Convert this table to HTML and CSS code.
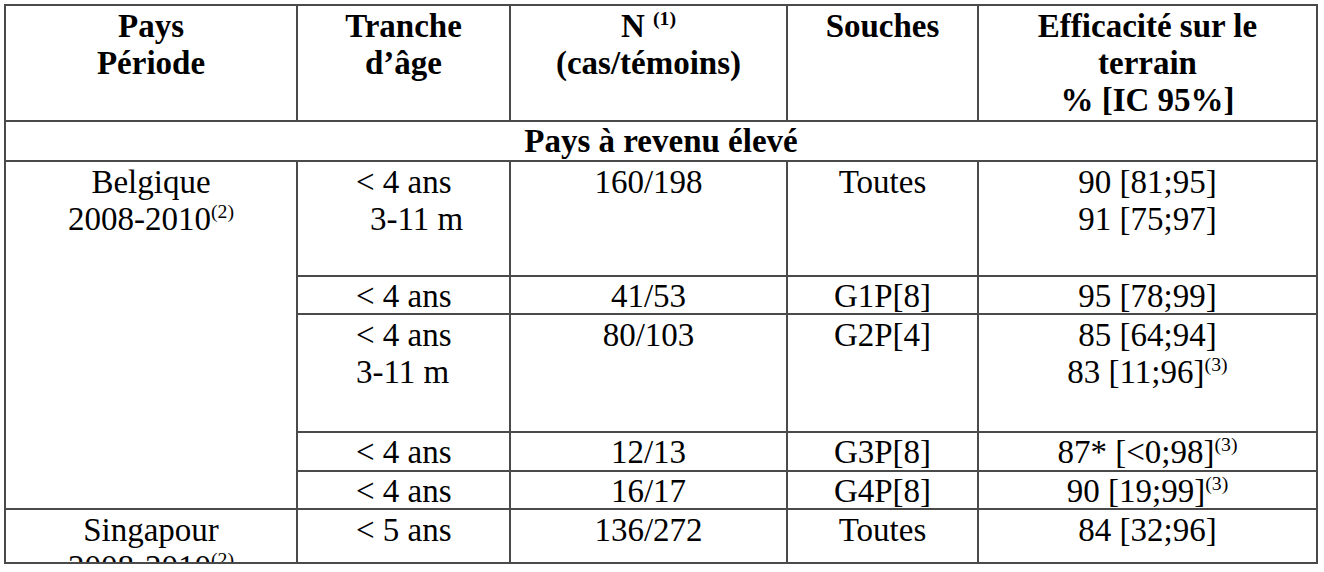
FILE: index.html
```html
<!DOCTYPE html>
<html lang="fr">
<head>
<meta charset="utf-8">
<title>Efficacité sur le terrain</title>
<link rel="stylesheet" href="styles.css">
</head>
<body>
<div class="frame">
<table class="data">
<colgroup>
<col class="c1"><col class="c2"><col class="c3"><col class="c4"><col class="c5">
</colgroup>
<thead>
<tr class="r-head">
<th>Pays<br>Période</th>
<th>Tranche<br>d’âge</th>
<th>N <sup>(1)</sup><br>(cas/témoins)</th>
<th>Souches</th>
<th>Efficacité sur le<br>terrain<br>% [IC 95%]</th>
</tr>
</thead>
<tbody>
<tr class="r-sec single">
<td colspan="5" class="sec">Pays à revenu élevé</td>
</tr>
<tr class="r-tall1">
<td rowspan="5">Belgique<br>2008-2010<sup>(2)</sup></td>
<td class="age">&lt; 4 ans<br><span class="indent">3-11 m</span></td>
<td>160/198</td>
<td>Toutes</td>
<td>90 [81;95]<br>91 [75;97]</td>
</tr>
<tr class="r-one single">
<td class="age">&lt; 4 ans</td>
<td>41/53</td>
<td>G1P[8]</td>
<td>95 [78;99]</td>
</tr>
<tr class="r-tall2">
<td class="age">&lt; 4 ans<br>3-11 m</td>
<td>80/103</td>
<td>G2P[4]</td>
<td>85 [64;94]<br>83 [11;96]<sup>(3)</sup></td>
</tr>
<tr class="r-one4 single">
<td class="age">&lt; 4 ans</td>
<td>12/13</td>
<td>G3P[8]</td>
<td>87* [&lt;0;98]<sup>(3)</sup></td>
</tr>
<tr class="r-one5 single">
<td class="age">&lt; 4 ans</td>
<td>16/17</td>
<td>G4P[8]</td>
<td>90 [19;99]<sup>(3)</sup></td>
</tr>
<tr class="r-last">
<td>Singapour<br>2008-2010<sup>(2)</sup></td>
<td class="age">&lt; 5 ans</td>
<td>136/272</td>
<td>Toutes</td>
<td>84 [32;96]</td>
</tr>
</tbody>
</table>
</div>
</body>
</html>
```
FILE: styles.css
```css
html, body {
  margin: 0;
  padding: 0;
  background: #ffffff;
}

body {
  font-family: "Liberation Serif", "Times New Roman", serif;
  font-size: 33px;
  line-height: 36.8px;
  color: #000000;
}

.frame {
  margin: 4px 0 0 4px;
  width: 1314px;
  height: 558px;
  overflow: hidden;
  border-bottom: 2px solid #4a4a4a;
}

.data {
  border-collapse: collapse;
  table-layout: fixed;
  width: 1314px;
}

.c1 { width: 292px; }
.c2 { width: 213px; }
.c3 { width: 277px; }
.c4 { width: 191px; }
.c5 { width: 339px; }

.data th,
.data td {
  border: 2px solid #4a4a4a;
  padding: 2px 4px 0 4px;
  vertical-align: top;
  text-align: center;
  font-weight: normal;
}

.data .single td {
  line-height: 33px;
  padding-top: 3px;
}

.data th {
  font-weight: bold;
}

.data td.sec {
  font-weight: bold;
}

.data td.age {
  text-align: left;
  padding-left: 58px;
}

.indent {
  padding-left: 14px;
}

sup {
  font-size: 60%;
  line-height: 0;
  vertical-align: 0.6em;
}

.r-head { height: 116px; }
.r-sec { height: 40px; }
.r-tall1 { height: 115px; }
.r-one { height: 37px; }
.r-tall2 { height: 118px; }
.r-one4 { height: 39px; }
.r-one5 { height: 38px; }
.r-last { height: 80px; }
```
